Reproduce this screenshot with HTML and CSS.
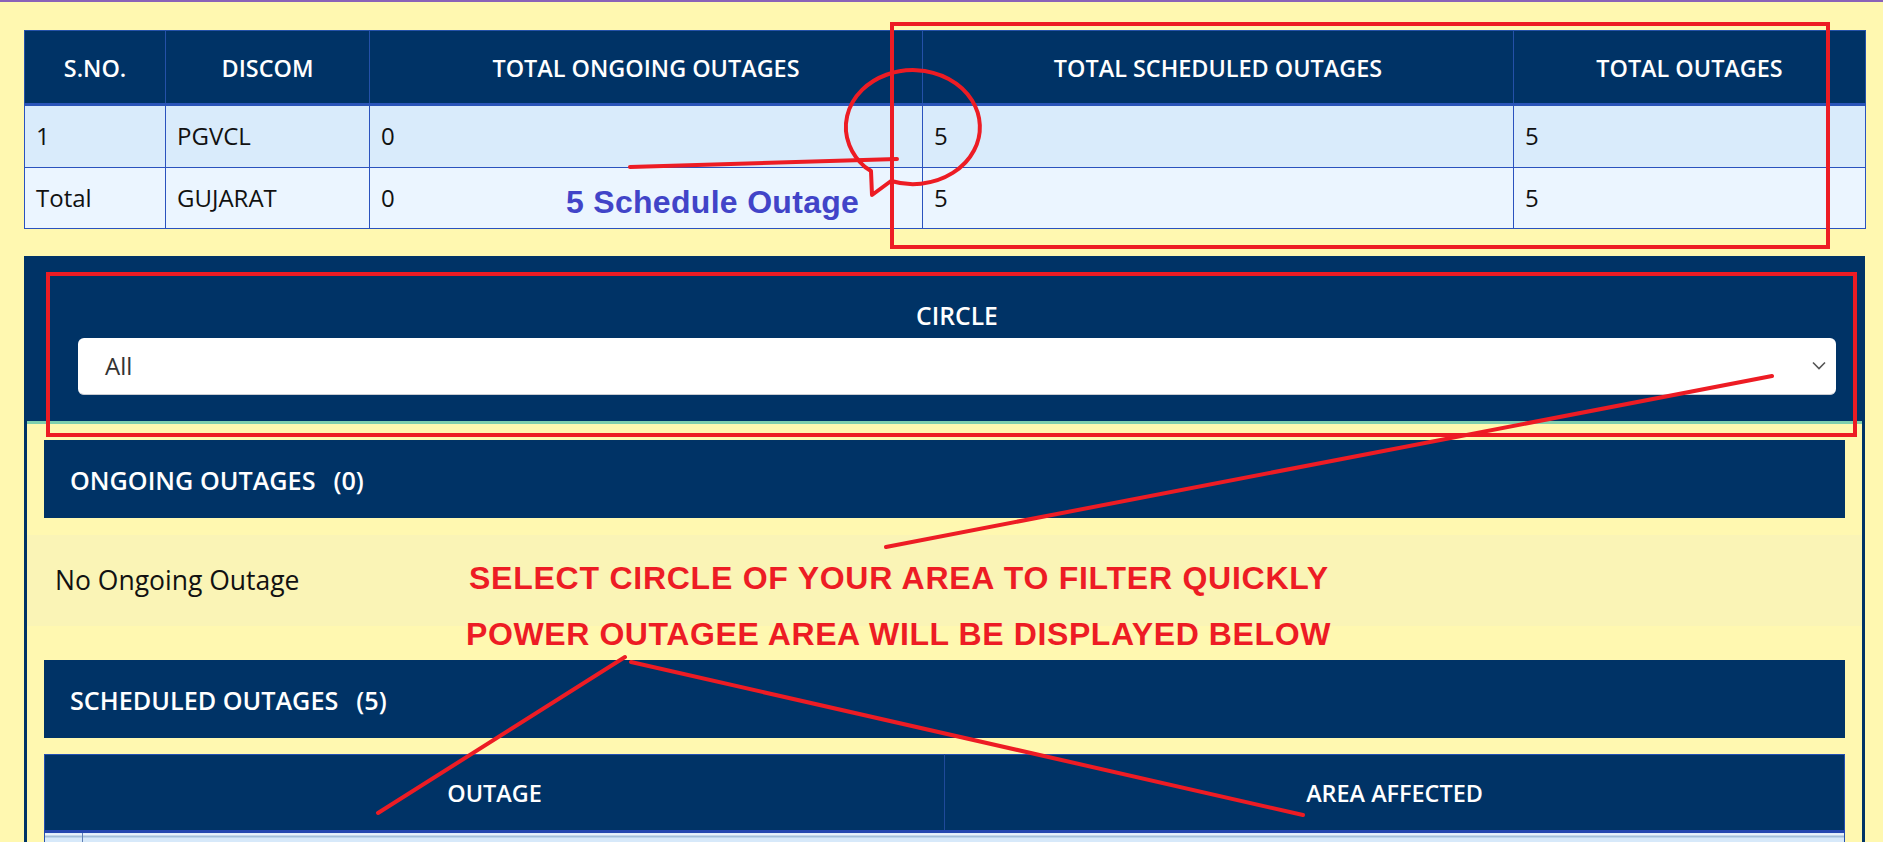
FILE: index.html
```html
<!DOCTYPE html>
<html lang="en">
<head>
<meta charset="utf-8">
<title>Outages</title>
<link rel="stylesheet" href="styles.css">
</head>
<body>
<div class="topbar"></div>
<main class="page">
  <table class="summary">
    <colgroup>
      <col class="c1"><col class="c2"><col class="c3"><col class="c4"><col class="c5">
    </colgroup>
    <thead>
      <tr>
        <th>S.NO.</th>
        <th>DISCOM</th>
        <th>TOTAL ONGOING OUTAGES</th>
        <th>TOTAL SCHEDULED OUTAGES</th>
        <th>TOTAL OUTAGES</th>
      </tr>
    </thead>
    <tbody>
      <tr class="odd">
        <td>1</td><td>PGVCL</td><td>0</td><td>5</td><td>5</td>
      </tr>
      <tr class="even">
        <td>Total</td><td>GUJARAT</td><td>0</td><td>5</td><td>5</td>
      </tr>
    </tbody>
  </table>

  <section class="card">
    <div class="filter">
      <div class="filter-label">CIRCLE</div>
      <div class="select">
        <span class="select-value">All</span>
        <svg class="chev" width="14" height="9" viewBox="0 0 14 9"><path d="M1 1.5 L7 7.5 L13 1.5" fill="none" stroke="#555" stroke-width="1.6"/></svg>
      </div>
    </div>
    <div class="card-body">
      <div class="section-head">ONGOING OUTAGES<span class="count">(0)</span></div>
      <div class="band">No Ongoing Outage</div>
      <div class="section-head sched">SCHEDULED OUTAGES<span class="count">(5)</span></div>
      <table class="outages">
        <colgroup>
          <col class="oc1"><col class="oc2"><col class="oc3">
        </colgroup>
        <thead>
          <tr><th colspan="2">OUTAGE</th><th class="area">AREA AFFECTED</th></tr>
        </thead>
        <tbody>
          <tr class="first"><td class="tiny"></td><td></td><td></td></tr>
        </tbody>
      </table>
    </div>
  </section>
</main>

<div class="annot">
  <svg class="annot-svg" width="1883" height="842" viewBox="0 0 1883 842">
    <g fill="none" stroke="#ed1c24" stroke-width="4" stroke-linecap="round" stroke-linejoin="round">
      <rect x="892" y="24" width="936" height="223" stroke-linecap="butt" stroke-linejoin="miter"/>
      <rect x="48" y="274" width="1807" height="161" stroke-linecap="butt" stroke-linejoin="miter"/>
      <path d="M865 167 L871 171 L872 195 L891 181 A67 57 0 1 0 865 167"/>
      <line x1="630" y1="167" x2="897" y2="159"/>
      <line x1="1772" y1="376" x2="886" y2="547"/>
      <line x1="625" y1="657" x2="378" y2="813"/>
      <line x1="631" y1="662" x2="1303" y2="815"/>
    </g>
  </svg>
  <div class="note note-blue">5 Schedule Outage</div>
  <div class="note note-red n1">SELECT CIRCLE OF YOUR AREA TO FILTER QUICKLY</div>
  <div class="note note-red n2">POWER OUTAGEE AREA WILL BE DISPLAYED BELOW</div>
</div>
</body>
</html>
```

FILE: styles.css
```css
html { overflow: hidden; }
* { box-sizing: border-box; }
body {
  margin: 0;
  background: #fff8b0;
  font-family: "Open Sans", "Liberation Sans", sans-serif;
  font-size: 24px;
  color: #111;
  position: relative;
  width: 1883px;
  height: 842px;
}
.topbar { height: 2px; background: #8a62b8; }
.page { padding: 28px 18px 0 24px; }

/* summary table */
.summary {
  width: 1841px;
  border-collapse: collapse;
  table-layout: fixed;
  border: 1px solid #2a52be;
}
.c1 { width: 141px; } .c2 { width: 204px; } .c3 { width: 553px; } .c4 { width: 591px; } .c5 { width: 352px; }
.summary th {
  background: #003366;
  color: #fff;
  font-weight: 600;
  font-size: 23.4px;
  line-height: 36px;
  padding: 19px 12px 17px;
  text-align: center;
  border: 1px solid #2451a8;
  border-bottom: 3px solid #2a54b8;
}
.summary td {
  line-height: 36px;
  padding: 12px 11px 13px;
  border: 1px solid #2a52be;
  text-align: left;
}
.summary .odd td { background: #d9ebfb; }
.summary .even td { background: #ebf5ff; padding-bottom: 12px; }

/* card */
.card {
  margin-top: 27px;
  width: 1841px;
  border-left: 3px solid #003366;
  border-right: 3px solid #003366;
}
.filter {
  background: #003366;
  padding: 42px 26px 26px 51px;
  border-bottom: 3px solid #7fcfae;
}
.filter-label {
  color: #fff;
  font-weight: 600;
  font-size: 24.7px;
  line-height: 36px;
  text-align: center;
  margin-bottom: 4px;
}
.select {
  height: 57px;
  background: #fff;
  border-radius: 6px;
  border-bottom: 1px solid #c9ccd2;
  display: flex;
  align-items: center;
  justify-content: space-between;
  padding: 0 10px 0 27px;
}
.select-value { color: #333; line-height: 36px; }
.chev { display: block; margin-top: -2px; }

.card-body { padding: 16px 17px 0; }
.section-head {
  background: #003366;
  color: #fff;
  font-weight: 600;
  font-size: 25.2px;
  height: 78px;
  line-height: 80px;
  padding: 0 26px;
}
.count { margin-left: 18px; }
.band {
  margin: 17px -17px 0;
  background: #faf4b6;
  font-size: 26.5px;
  height: 91px;
  line-height: 91px;
  padding: 0 28px;
}
.sched { margin-top: 34px; }

.outages {
  margin-top: 16px;
  width: 100%;
  border-collapse: collapse;
  table-layout: fixed;
  border: 1px solid #2550b0;
}
.oc1 { width: 38px; }
.oc3 { width: 50%; }
.outages th {
  background: #003366;
  color: #fff;
  font-weight: 600;
  font-size: 23.4px;
  line-height: 36px;
  padding: 20px 12px 19px;
  text-align: center;
  border-bottom: 3px solid #2447b0;
}
.outages th.area { border-left: 1px solid #1f4a9a; }
.outages td {
  height: 40px;
  padding: 0;
  background: linear-gradient(#e8f1fb 0 2px, #a3bed9 2px 4px, #d7e9fa 4px);
}
.outages .tiny { border-right: 1px solid #5f7fb5; }

/* annotations drawn over the screenshot */
.annot {
  position: absolute;
  left: 0;
  top: 0;
  width: 1883px;
  height: 842px;
  pointer-events: none;
}
.annot-svg { position: absolute; left: 0; top: 0; }
.note {
  position: absolute;
  font-family: "Liberation Sans", Arial, sans-serif;
  font-weight: 700;
  font-size: 32px;
  line-height: 32px;
  white-space: nowrap;
}
.note-blue { color: #4144c8; left: 566px; top: 186px; letter-spacing: 0.3px; }
.note-red { color: #ed1c24; }
.n1 { left: 469px; top: 562px; letter-spacing: 0.75px; }
.n2 { left: 466px; top: 618px; letter-spacing: 0.6px; }
```
